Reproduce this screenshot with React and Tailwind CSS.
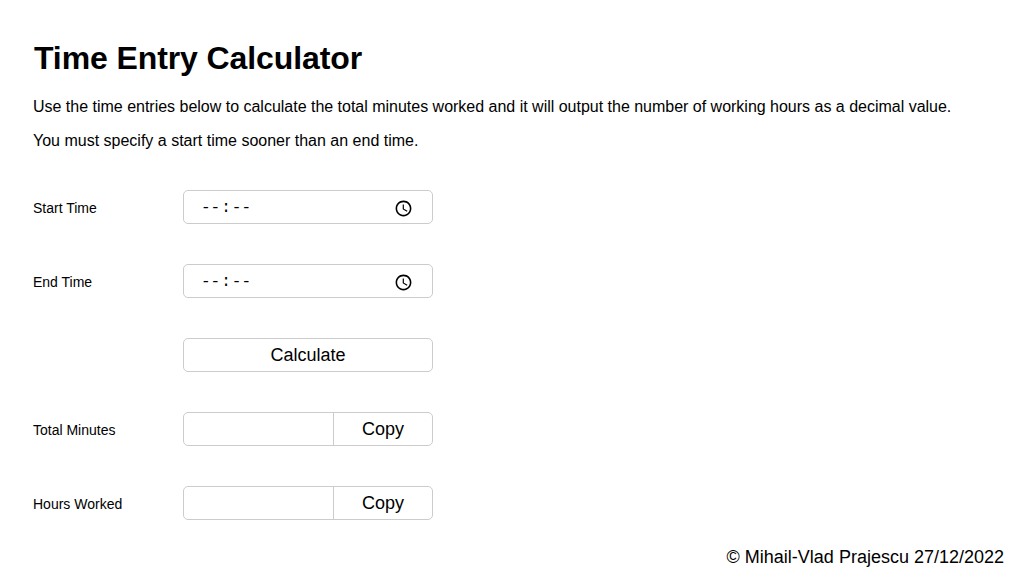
const rowClass = "flex items-center h-[34px]";
const labelClass = "w-[150px] pt-px text-sm text-black";
const boxClass = "w-[250px] h-[34px] border border-[#cccccc] rounded-[5px] bg-white";

function TimeRow({ label }) {
  return (
    <div className={rowClass}>
      <label className={labelClass}>{label}</label>
      <input
        type="time"
        className={`${boxClass} pl-[16px] pr-[19px] pt-[2px] text-base font-['Liberation_Mono',monospace] text-black [&::-webkit-datetime-edit-ampm-field]:hidden [&::-webkit-calendar-picker-indicator]:w-[19px] [&::-webkit-calendar-picker-indicator]:h-[19px] [&::-webkit-calendar-picker-indicator]:p-0 [&::-webkit-calendar-picker-indicator]:m-0`}
      />
    </div>
  );
}

function OutputRow({ label }) {
  return (
    <div className={rowClass}>
      <label className={labelClass}>{label}</label>
      <div className={`${boxClass} flex overflow-hidden`}>
        <input type="text" readOnly className="w-[149px] h-full px-2 outline-none" />
        <button className="flex-1 border-l border-[#cccccc] text-lg text-black">Copy</button>
      </div>
    </div>
  );
}

export default function App() {
  return (
    <div className="min-h-[574px] bg-white font-['Liberation_Sans',Arial,sans-serif] text-black pl-[33px] pr-[13px]">
      <h1 className="pt-[40px] pl-px text-[32px] leading-[37px] font-bold tracking-[-0.1px]">Time Entry Calculator</h1>
      <p className="mt-[21px] text-base leading-[18px] tracking-[-0.01px]">
        Use the time entries below to calculate the total minutes worked and it will output the number of working hours as a decimal value.
      </p>
      <p className="mt-4 text-base leading-[18px]">You must specify a start time sooner than an end time.</p>

      <div className="mt-[40px] flex flex-col gap-[40px]">
        <TimeRow label="Start Time" />
        <TimeRow label="End Time" />
        <div className={rowClass}>
          <div className="w-[150px]" />
          <button className={`${boxClass} text-lg text-black`}>Calculate</button>
        </div>
        <OutputRow label="Total Minutes" />
        <OutputRow label="Hours Worked" />
      </div>

      <p className="mt-[27px] text-right text-lg leading-[21px]">© Mihail-Vlad Prajescu 27/12/2022</p>
    </div>
  );
}
